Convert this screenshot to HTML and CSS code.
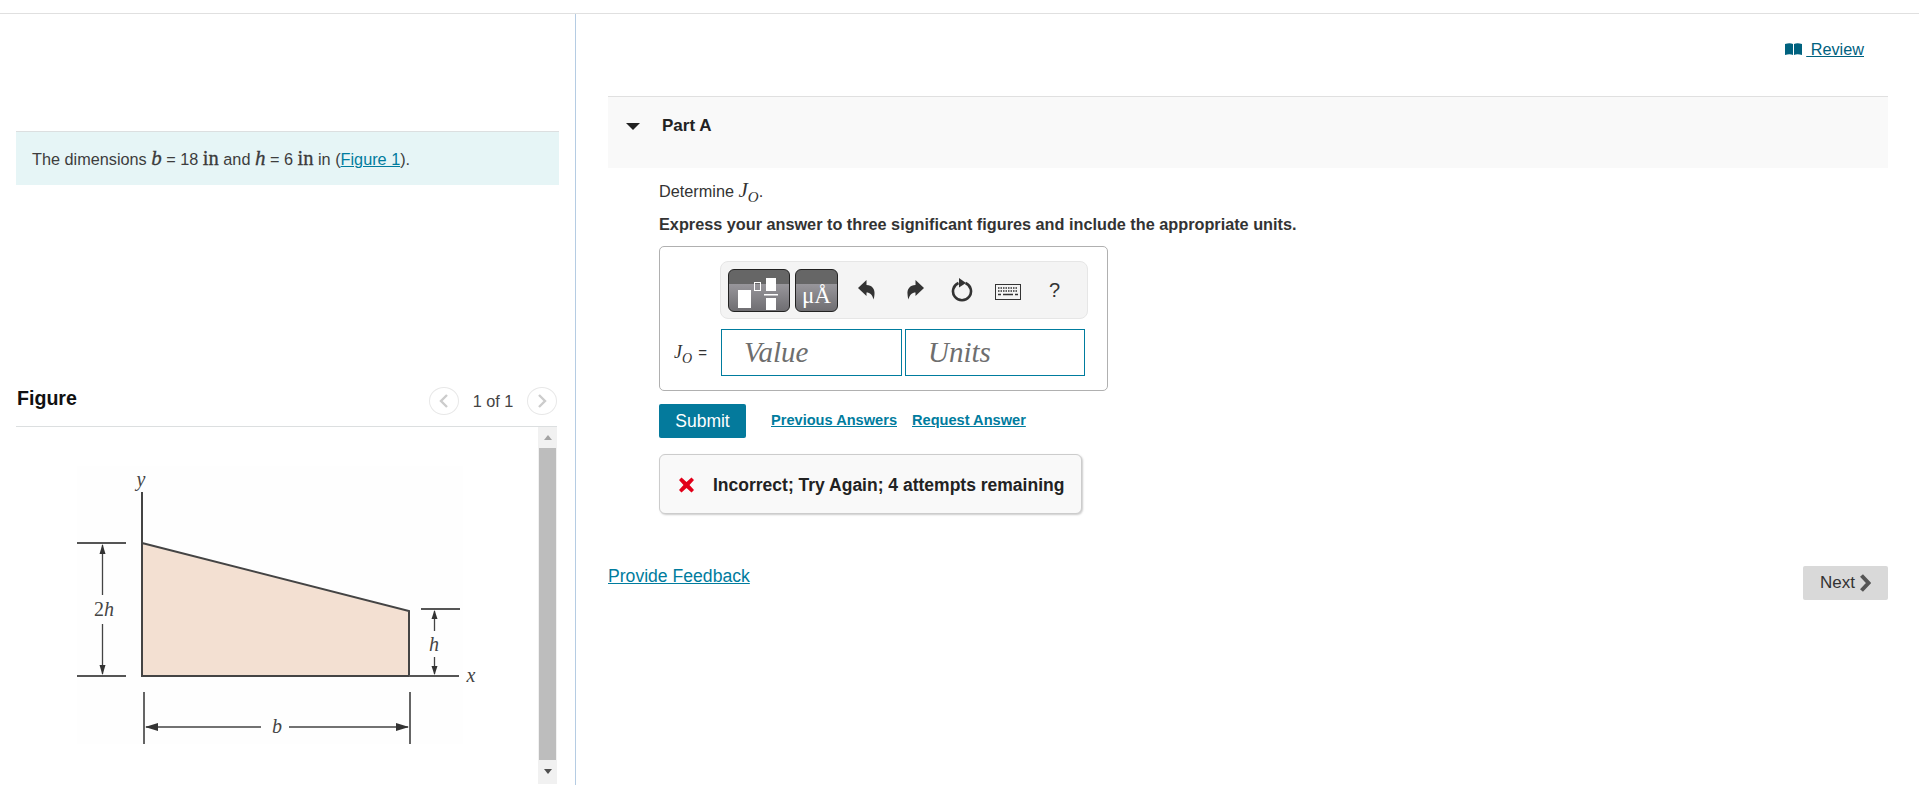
FILE: index.html
```html
<!DOCTYPE html>
<html lang="en">
<head>
  <meta charset="UTF-8">
  <title>Part A</title>
  <link rel="stylesheet" href="styles.css">
</head>
<body>
  <div class="page">
    <div class="left">
      <div class="intro">The dimensions <i class="math">b</i> = 18 <span class="unit">in</span> and <i class="math">h</i> = 6 <span class="unit">in</span> in (<a href="#">Figure 1</a>).</div>

      <div class="figure-head">
        <h2>Figure</h2>
        <div class="pager">
          <span class="circle"><svg width="12" height="16" viewBox="0 0 12 16"><path d="M9 2 3 8l6 6" fill="none" stroke="#ccc" stroke-width="2.4"/></svg></span>
          <span class="count">1 of 1</span>
          <span class="circle"><svg width="12" height="16" viewBox="0 0 12 16"><path d="M3 2l6 6-6 6" fill="none" stroke="#ccc" stroke-width="2.4"/></svg></span>
        </div>
      </div>

      <div class="figure-body">
        <svg class="diagram" width="521" height="357" viewBox="16 428 521 357">
          <rect x="77" y="467" width="386" height="278" fill="#fefefe"/>
          <path d="M142 544 409 612V677H142Z" fill="#f3e0d2"/>
          <path d="M142 493V677H409V612L142 544" fill="none" stroke="#444" stroke-width="2"/>
          <path d="M409 677H459M77 544H126M77 677H126M421 610H460M144 693V745M410 693V745" fill="none" stroke="#555" stroke-width="1.8"/>
          <path d="M102.500 546V596M102.500 625V675M434.500 612V632M434.500 658V675M146 728H261M289 728H408" fill="none" stroke="#444" stroke-width="1.300"/>
          <path d="M102.500 545l-3 10h6ZM102.500 676l-3-10h6ZM434.500 611l-3 9h6ZM434.500 676l-3-9h6ZM145 728l13-4v8ZM409 728l-13-4v8Z" fill="#333"/>
          <text class="fig-label" x="141" y="487" text-anchor="middle">y</text>
          <text class="fig-num" x="104" y="617" text-anchor="middle">2<tspan font-style="italic">h</tspan></text>
          <text class="fig-label" x="434" y="652" text-anchor="middle">h</text>
          <text class="fig-label" x="471" y="683" text-anchor="middle">x</text>
          <text class="fig-label" x="277" y="734" text-anchor="middle">b</text>
        </svg>
        <div class="scrollbar">
          <span class="arrow-up"></span>
          <span class="thumb"></span>
          <span class="arrow-down"></span>
        </div>
      </div>
    </div>

    <div class="right">
      <div class="review-row">
        <a href="#" class="review">
          <svg width="17" height="12" viewBox="0 0 17 12"><path d="M0 1C3 0 6 0 8 1v11C6 11 3 11 0 12ZM9 1c2-1 5-1 8 0v11c-3-1-6-1-8 0Z" fill="#00627f"/></svg>
          <span>&nbsp;Review</span>
        </a>
      </div>

      <div class="part-head">
        <span class="caret"></span>
        <span class="part-title">Part A</span>
      </div>

      <div class="part-body">
        <p class="question">Determine <i class="math-j">J<sub>O</sub></i>.</p>
        <p class="instruction">Express your answer to three significant figures and include the appropriate units.</p>

        <div class="answer-box">
          <div class="toolbar">
            <span class="tpl tpl-wide">
              <svg width="60" height="41" viewBox="0 0 60 41">
                <path d="M9 20h13v18H9ZM37 8h10v13H37ZM37 28h10v12H37ZM35 24h14v1.500H35Z" fill="#fff"/>
                <rect x="25.500" y="12.500" width="6" height="8" fill="none" stroke="#fff"/>
              </svg>
            </span>
            <span class="tpl tpl-narrow">μÅ</span>
            <svg class="tool tool-undo" width="17" height="20" viewBox="0 0 17 20"><path d="M0 8 8.500 0v5C14 5 17 9 16.500 14c-.2 2.500-.5 4-1 5.500-1-4.500-3.500-7-7-7V16Z" fill="#333"/></svg>
            <svg class="tool tool-redo" width="17" height="20" viewBox="0 0 17 20"><path d="M17 8 8.500 0v5C3 5 0 9 .5 14c.2 2.500.5 4 1 5.500 1-4.500 3.500-7 7-7V16Z" fill="#333"/></svg>
            <svg class="tool tool-reset" width="22" height="24" viewBox="0 0 22 24"><path d="M7.500 5a9 9 0 1 0 7 0" fill="none" stroke="#333" stroke-width="2.600"/><path d="M8 0l7 5-7 4.500Z" fill="#333"/></svg>
            <svg class="tool tool-keys" width="26" height="16" viewBox="0 0 26 16">
              <rect x=".5" y=".5" width="25" height="15" fill="#f4f4f4" stroke="#333"/>
              <path d="M3 4h20M3 7h20" stroke="#333" stroke-width="1.500" stroke-dasharray="1.500 1"/>
              <path d="M3 10.500h3M8 10.500h10M20 10.500h3" stroke="#333" stroke-width="1.500"/>
            </svg>
            <span class="tool-help">?</span>
          </div>
          <div class="answer-row">
            <span class="answer-label"><i class="math-j">J<sub>O</sub></i> <span class="equals">=</span></span>
            <input class="value-input" type="text" placeholder="Value">
            <input class="units-input" type="text" placeholder="Units">
          </div>
        </div>

        <div class="actions">
          <button class="submit">Submit</button>
          <a href="#" class="action-link first">Previous Answers</a>
          <a href="#" class="action-link">Request Answer</a>
        </div>

        <div class="feedback">
          <svg width="17" height="16" viewBox="0 0 17 16"><path d="M1 3 3.500.5l5 4.500 5-4.500L16 3l-4.500 5 4.500 5-2.500 2.500-5-4.500-5 4.500L1 13l4.500-5Z" fill="#e2001a"/></svg>
          <span>Incorrect; Try Again; 4 attempts remaining</span>
        </div>
      </div>

      <div class="bottom-row">
        <a href="#" class="provide">Provide Feedback</a>
        <button class="next">Next <svg width="12" height="18" viewBox="0 0 12 18"><path d="M2.500 1.500 9.500 9l-7 7.500" fill="none" stroke="#555" stroke-width="4"/></svg></button>
      </div>
    </div>
  </div>
</body>
</html>
```

FILE: styles.css
```css
html, body {
  margin: 0;
  height: 785px;
  overflow: hidden;
  background: #fff;
}
body {
  box-sizing: border-box;
  padding-top: 13px;
  font-family: "Liberation Sans", Arial, sans-serif;
  font-size: 16.250px;
  color: #333;
}
a {
  color: #007c9e;
}
.page {
  display: flex;
  height: 772px;
  border-top: 1px solid #e0e0e0;
}

/* left column */
.left {
  padding-left: 16px;
  box-sizing: border-box;
  flex: 0 0 576px;
  border-right: 1px solid #b5cce3;
}
.intro {
  margin-top: 117px;
  width: 543px;
  height: 54px;
  box-sizing: border-box;
  padding-left: 16px;
  line-height: 52px;
  background: #e6f5f6;
  border-top: 1px solid #dcdfe0;
  color: #3d3d3d;
}
.math {
  font-family: "Liberation Serif", serif;
  font-size: 21px;
  -webkit-text-stroke: 0.3px #333;
}
.unit {
  font-family: "Liberation Serif", serif;
  font-size: 20.500px;
  -webkit-text-stroke: 0.3px #333;
}
.figure-head {
  display: flex;
  justify-content: space-between;
  align-items: center;
  margin-top: 200px;
  width: 541px;
  height: 42px;
  box-sizing: border-box;
  border-bottom: 1px solid #dcdfe0;
  padding-bottom: 14px;
}
.figure-head h2 {
  margin: 0 0 0 1px;
  font-size: 19.600px;
  color: #111;
}
.pager {
  display: flex;
  align-items: center;
  margin-top: 4px;
}
.circle {
  display: flex;
  align-items: center;
  justify-content: center;
  width: 30px;
  height: 28px;
  box-sizing: border-box;
  border: 1px solid #e8e8e8;
  border-radius: 50%;
}
.count {
  width: 68px;
  padding-top: 2px;
  text-align: center;
  color: #444;
}
.figure-body {
  display: flex;
  height: 357px;
  width: 541px;
}
.diagram {
  display: block;
  flex: none;
}
.fig-label {
  font-family: "Liberation Serif", serif;
  font-style: italic;
  font-size: 20px;
  fill: #444;
}
.fig-num {
  font-family: "Liberation Serif", serif;
  font-size: 20px;
  fill: #444;
}
.scrollbar {
  display: flex;
  flex-direction: column;
  align-items: center;
  margin-left: 1px;
  width: 19px;
  background: #f1f1f1;
}
.thumb {
  width: 17px;
  height: 312px;
  margin-top: 8px;
  background: #bdbdbd;
}
.arrow-up, .arrow-down {
  width: 0;
  height: 0;
  border-left: 4px solid transparent;
  border-right: 4px solid transparent;
}
.arrow-up {
  margin-top: 8px;
  border-bottom: 5px solid #a3a3a3;
}
.arrow-down {
  margin-top: 9px;
  border-top: 5px solid #505050;
}

/* right column */
.right {
  flex: 1;
  padding: 0 31px 0 32px;
}
.review-row {
  display: flex;
  justify-content: flex-end;
  height: 82px;
  padding: 25px 24px 0 0;
  box-sizing: border-box;
}
.review {
  display: flex;
  align-items: center;
  height: 20px;
  color: #00627f;
  text-decoration: none;
}
.review span {
  text-decoration: underline;
  margin-left: 4px;
}
.part-head {
  display: flex;
  align-items: flex-start;
  height: 72px;
  box-sizing: border-box;
  border-top: 1px solid #e0e0e0;
  background: #f9f9f9;
  padding: 19px 0 0 18px;
  font-weight: bold;
  color: #222;
}
.caret {
  width: 0;
  height: 0;
  margin-top: 7px;
  border-left: 7px solid transparent;
  border-right: 7px solid transparent;
  border-top: 7px solid #222;
}
.part-title {
  margin-left: 22px;
  font-size: 17px;
  line-height: 20px;
}
.part-body {
  padding-left: 51px;
}
.question {
  margin: 10px 0 0;
  line-height: 24px;
}
.math-j {
  font-family: "Liberation Serif", serif;
  font-size: 21px;
}
.math-j sub {
  font-size: 15px;
  line-height: 0;
}
.instruction {
  margin: 9px 0 0;
  line-height: 24px;
  font-weight: bold;
}
.answer-box {
  width: 449px;
  height: 145px;
  margin-top: 10px;
  box-sizing: border-box;
  border: 1px solid #b0b0b0;
  border-radius: 5px;
  padding-top: 14px;
}
.toolbar {
  display: flex;
  align-items: center;
  width: 368px;
  height: 58px;
  margin-left: 60px;
  box-sizing: border-box;
  padding-left: 7px;
  background: #f4f4f4;
  border: 1px solid #e6e6e6;
  border-radius: 8px;
}
.tpl {
  display: block;
  height: 43px;
  box-sizing: border-box;
  border: 1px solid #222;
  border-radius: 6px;
  background: linear-gradient(#666 0 34%, #98969b 34%, #6f6e72 100%);
}
.tpl svg {
  display: block;
}
.tpl-wide {
  width: 62px;
}
.tpl-narrow {
  width: 43px;
  margin-left: 5px;
  font-family: "Liberation Serif", serif;
  font-size: 23px;
  line-height: 52px;
  text-align: center;
  color: #fff;
  overflow: hidden;
}
.tool {
  flex: none;
}
.tool-undo {
  margin-left: 20px;
}
.tool-redo {
  margin-left: 32px;
}
.tool-reset {
  margin-left: 27px;
}
.tool-keys {
  margin-left: 22px;
  margin-top: 4px;
}
.tool-help {
  margin-left: 28px;
  font-size: 20px;
  color: #333;
}
.answer-row {
  display: flex;
  align-items: center;
  margin-top: 10px;
  padding-left: 14px;
}
.answer-label {
  width: 47px;
  flex: none;
  font-size: 15px;
  white-space: nowrap;
}
.answer-label .math-j {
  font-size: 18px;
}
.answer-label sub {
  font-size: 14px;
}
.equals {
  margin-left: 2px;
}
.value-input, .units-input {
  height: 47px;
  box-sizing: border-box;
  border: 1px solid #007c9e;
  border-radius: 0;
  padding: 0 0 0 22px;
  font-family: "Liberation Serif", serif;
  font-style: italic;
  font-size: 29px;
  background: #fff;
}
.value-input::placeholder, .units-input::placeholder {
  color: #6e6e6e;
  opacity: 1;
}
.value-input {
  width: 181px;
}
.units-input {
  width: 180px;
  margin-left: 3px;
}
.actions {
  display: flex;
  align-items: center;
  margin-top: 13px;
}
.submit {
  width: 87px;
  height: 34px;
  border: none;
  border-radius: 2px;
  background: #047a9c;
  color: #fff;
  font-family: inherit;
  font-size: 17.500px;
  padding: 0;
}
.action-link {
  margin-left: 15px;
  margin-bottom: 2px;
  font-size: 14.600px;
  font-weight: bold;
}
.action-link.first {
  margin-left: 25px;
}
.feedback {
  display: flex;
  align-items: center;
  width: 423px;
  height: 60px;
  margin-top: 16px;
  box-sizing: border-box;
  padding: 2px 0 0 18px;
  background: #f9f9f9;
  border: 1px solid #ccc;
  border-radius: 6px;
  box-shadow: 1px 1px 2px #ccc;
  font-size: 17.500px;
  font-weight: bold;
  color: #222;
}
.feedback span {
  margin-left: 18px;
  white-space: nowrap;
}
.bottom-row {
  display: flex;
  justify-content: space-between;
  align-items: flex-start;
  margin-top: 52px;
}
.provide {
  font-size: 17.600px;
  line-height: 20px;
}
.next {
  display: flex;
  align-items: center;
  justify-content: center;
  gap: 4px;
  width: 85px;
  height: 34px;
  border: none;
  border-radius: 2px;
  background: #d9d9d9;
  font-family: inherit;
  font-size: 17px;
  color: #333;
  padding: 0;
}
```
